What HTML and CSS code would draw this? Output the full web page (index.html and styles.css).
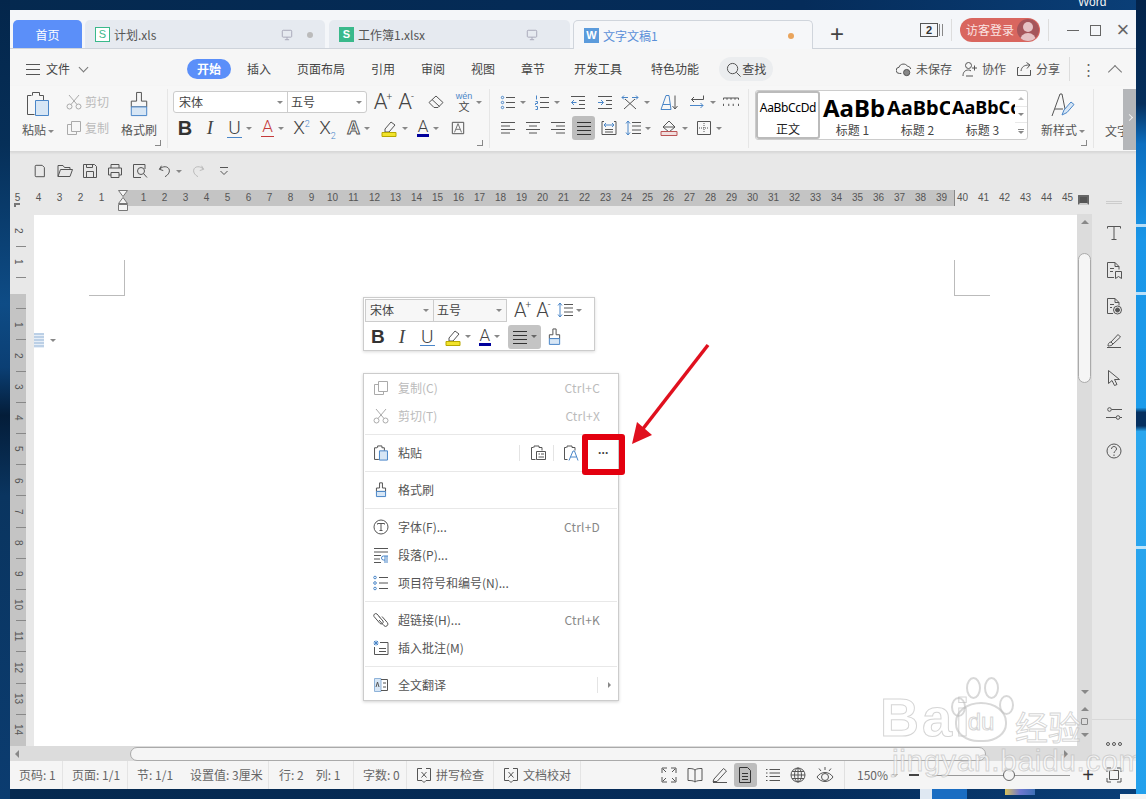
FILE: index.html
```html
<!DOCTYPE html>
<html lang="zh">
<head>
<meta charset="utf-8">
<title>文字文稿1</title>
<link rel="stylesheet" href="styles.css">
</head>
<body>
<svg class="sprite" xmlns="http://www.w3.org/2000/svg">
<symbol id="paste" viewBox="0 0 24 26"><path d="M5.5 4.5H1.5v19h7M6.5 4.500v-3h7v3h4v5"/><rect x="9.500" y="9.500" width="13" height="15" fill="#d7e6f5" stroke="#4a86c8"/></symbol>
<symbol id="cut" viewBox="0 0 16 16"><circle cx="3.500" cy="12.500" r="2.500"/><circle cx="12.500" cy="12.500" r="2.500"/><path d="M5 10.500 13 1M11 10.500 3 1"/></symbol>
<symbol id="copy" viewBox="0 0 16 16"><rect x="5.500" y="1.500" width="9" height="10"/><path d="M5.500 4.500h-4v10h9v-3"/></symbol>
<symbol id="brush" viewBox="0 0 20 28"><path d="M7.500 1.500h5v9h5.500v6H2v-6h5.500z"/><rect x="2" y="16.500" width="16" height="9" fill="#d7e6f5" stroke="#4a86c8"/></symbol>
<symbol id="eraser" viewBox="0 0 16 16"><path d="M1 8.500 8 2l7 6.500-5 5H6zM4 5.500l7.500 7"/></symbol>
<symbol id="frame-a" viewBox="0 0 16 16"><rect x="1.500" y="1.500" width="13" height="13"/><path d="M4 13 8 3l4 10M5.500 9.500h5" stroke="#777"/></symbol>
<symbol id="pen" viewBox="0 0 18 18"><path d="M5 10 11 3l4 3-6 7H5z"/><rect x="2" y="13.500" width="14" height="4" fill="#f2e32b" stroke="#b7a800"/></symbol>
<symbol id="list" viewBox="0 0 16 16"><path d="M6 3.500h9M6 8.500h9M6 13.500h9"/><circle cx="2.500" cy="3.500" r="1.200" stroke="#4a86c8"/><circle cx="2.500" cy="8.500" r="1.200" stroke="#4a86c8"/><circle cx="2.500" cy="13.500" r="1.200" stroke="#4a86c8"/></symbol>
<symbol id="num" viewBox="0 0 16 16"><path d="M6 3.500h9M6 8.500h9M6 13.500h9"/><path d="M2.500 1.500v4M1.500 7.500h2v2h-2v1.500M1.500 12.500h2v3h-2" stroke="#4a86c8"/></symbol>
<symbol id="ind-l" viewBox="0 0 16 16"><path d="M1 2.500h14M9 6.500h6M9 10.500h6M1 14.500h14"/><path d="M6.500 8.500h-5M4 6l-2.500 2.500L4 11" stroke="#4a86c8"/></symbol>
<symbol id="ind-r" viewBox="0 0 16 16"><path d="M1 2.500h14M9 6.500h6M9 10.500h6M1 14.500h14"/><path d="M1 8.500h5M4 6l2.500 2.500L4 11" stroke="#4a86c8"/></symbol>
<symbol id="layout" viewBox="0 0 20 16"><path d="M4 15 15 5M5 5l11 10"/><path d="M2 3.500h6M4 1.500l-2 2 2 2M12 3.500h6M16 1.500l2 2-2 2" stroke="#4a86c8"/></symbol>
<symbol id="sort" viewBox="0 0 18 16"><path d="M1 15.500 6 1.500h3l2 14M3 10.500h7M1 15.500h10" stroke="#4a86c8"/><path d="M15 1.500v13M12.500 12l2.500 3 2.500-3"/></symbol>
<symbol id="para" viewBox="0 0 18 16"><path d="M15.500 1.500v4h-12M6 3 3.500 5.500 6 8"/><path d="M2 11.500h13M12.500 9l2.500 2.500-2.500 2.500" stroke="#4a86c8"/></symbol>
<symbol id="rul" viewBox="0 0 18 12"><path d="M.5 1.500h17v2M.5 1.500v2M4.500 1.500v2M9 1.500v2M13.500 1.500v2M.5 8v2.500M17.500 8v2.500M6.500 8v2.500M11.500 8v2.500" stroke="#555"/></symbol>
<symbol id="al-l" viewBox="0 0 16 16"><path d="M1 2.500h14M1 6h9M1 9.500h14M1 13h9"/></symbol>
<symbol id="al-c" viewBox="0 0 16 16"><path d="M1 2.500h14M4 6h8M1 9.500h14M4 13h8"/></symbol>
<symbol id="al-r" viewBox="0 0 16 16"><path d="M1 2.500h14M6 6h9M1 9.500h14M6 13h9"/></symbol>
<symbol id="al-j" viewBox="0 0 16 16"><path d="M1 2.500h14M1 6.500h14M1 10.500h14M1 14.500h14"/></symbol>
<symbol id="dist" viewBox="0 0 16 16"><path d="M1 1.500v13h14v-13M1 1.500h2M13 1.500h2M4 9.500h8M4 12h8"/><path d="M3 5h10M5 3 3 5l2 2M11 3l2 2-2 2" stroke="#4a86c8"/></symbol>
<symbol id="spacing" viewBox="0 0 16 16"><path d="M7 2.500h9M7 6h9M7 10h9M7 13.500h9"/><path d="M3 1v14M1 3.500 3 1l2 2.500M1 12.500 3 15l2-2.500" stroke="#4a86c8"/></symbol>
<symbol id="shade" viewBox="0 0 18 16"><path d="M3 7 9 1l6 6-6 5z"/><path d="M3 7h12"/><path d="M1 11.500h16v4H1z" stroke="#b55" fill="#f1dede"/></symbol>
<symbol id="borders" viewBox="0 0 16 16"><rect x="1.500" y="1.500" width="13" height="13"/><path d="M8 3v10M3 8h10" stroke-dasharray="1 1"/></symbol>
<symbol id="newstyle" viewBox="0 0 24 24"><path d="M1 23 9 1h2l3 15M4 16h8"/><path d="M11 22l2-5 7-8 3 2.500-7 8z" stroke="#4a86c8" fill="#d7e6f5"/></symbol>
<symbol id="q-new" viewBox="0 0 16 16"><path d="M3.500 1.500h7l2.500 2.500v10.500h-9.500a1 1 0 0 1-1-1v-11a1 1 0 0 1 1-1z"/></symbol>
<symbol id="q-open" viewBox="0 0 16 16"><path d="M1 13.500v-11h5l1.500 2H13v2M1 13.500l2.500-7H15.500l-2.500 7z"/></symbol>
<symbol id="q-save" viewBox="0 0 16 16"><path d="M1.500 1.500h11l2 2v11h-13zM4.500 14.500v-6h7v6M4.500 1.500v3h6v-3"/></symbol>
<symbol id="q-print" viewBox="0 0 16 16"><path d="M4 5V1.500h8V5M4 12H1.500V5h13v7H12M4 9.500h8v5H4z"/></symbol>
<symbol id="q-prev" viewBox="0 0 16 16"><path d="M13 6V1.500H1.500v13H9"/><circle cx="9" cy="8" r="3.500"/><path d="M11.500 10.500l3.500 4"/></symbol>
<symbol id="q-undo" viewBox="0 0 16 16"><path d="M4 2 1.500 6 6 7.500M2 6c3-4 10-4 11 1 .5 3-2 6-5 7.500"/></symbol>
<symbol id="q-redo" viewBox="0 0 16 16"><path d="M12 2l2.500 4L10 7.500M14 6c-3-4-10-4-11 1-.5 3 2 6 5 7.500"/></symbol>
<symbol id="q-more" viewBox="0 0 10 10"><path d="M1 1.500h8M1.500 5l3.500 3.500L8.500 5"/></symbol>
<symbol id="s-t" viewBox="0 0 16 16"><path d="M1.500 3.500v-2h13v2M8 1.500v13M5.500 14.500h5"/></symbol>
<symbol id="s-mark" viewBox="0 0 16 18"><path d="M8 16.500H1.500V1.500H9l4 4v3M9 1.500v4h4M4 7.500h4M4 10.500h3"/><path d="M9.500 10.500h6v7l-3-2-3 2z"/></symbol>
<symbol id="s-star" viewBox="0 0 16 18"><path d="M7 16.500H1.500V1.500H9l4 4v3M9 1.500v4h4M4 7.500h4M4 10.500h2"/><circle cx="11.500" cy="13" r="4"/><circle cx="11.500" cy="13" r="2" fill="#555"/></symbol>
<symbol id="s-pen" viewBox="0 0 16 16"><path d="M5 9 12 1.500l2.500 2.500L7 11zM5 9c-2 0-3 2-3 4 2 0 4-.5 5-2M1 14.500h14"/></symbol>
<symbol id="s-cur" viewBox="0 0 16 18"><path d="M2.500 1.500v13l3.500-3 2.500 5 2.500-1-2.500-5h5z"/></symbol>
<symbol id="s-sl" viewBox="0 0 16 16"><circle cx="3.500" cy="3.500" r="1.800"/><path d="M5.500 3.500H16M0 11.500h10"/><circle cx="12" cy="11.500" r="1.800"/><path d="M14 11.500h2"/></symbol>
<symbol id="s-help" viewBox="0 0 16 16"><circle cx="8" cy="8" r="7"/><path d="M5.500 6c0-3.300 5-3.300 5 0 0 2-2.500 2-2.500 4M8 11.500v1.500"/></symbol>
<symbol id="st-x" viewBox="0 0 16 16"><path d="M6 1.500H1.500v12H6l2 2 2-2h4.500v-12H10M5.500 5l5 5.500M10.500 5l-5 5.500"/></symbol>
<symbol id="st-full" viewBox="0 0 16 16"><path d="M1 6V1h5M2 2l3 3M15 6V1h-5M14 2l-3 3M1 10v5h5M2 14l3-3M15 10v5h-5M14 14l-3-3"/></symbol>
<symbol id="st-book" viewBox="0 0 16 16"><path d="M8 3c-2-1.500-4-1.500-7-1.500v12c3 0 5 0 7 1.500 2-1.500 4-1.500 7-1.500v-12c-3 0-5 0-7 1.500zM8 3v12"/></symbol>
<symbol id="st-pen" viewBox="0 0 16 16"><path d="M2 12 11.500 1.500l3 2.500L5 14.500H1zM1 15.500h14"/></symbol>
<symbol id="st-doc" viewBox="0 0 14 16"><path d="M1.500 .500h8l3 3v12h-11zM4 6.500h6M4 9.500h6M4 12.500h6"/></symbol>
<symbol id="st-list" viewBox="0 0 16 16"><path d="M1 2.500h1.500M4.500 2.500H15M1 6h1.500M4.500 6H15M1 9.500h1.500M4.500 9.500H15M1 13.500h1.500M4.500 13.500H15"/></symbol>
<symbol id="st-globe" viewBox="0 0 16 16"><circle cx="8" cy="8" r="7"/><ellipse cx="8" cy="8" rx="3.500" ry="7"/><path d="M1 8h14M2 4.500h12M2 11.500h12M8 1v14"/></symbol>
<symbol id="st-eye" viewBox="0 0 18 18"><path d="M1 11c4-6 12-6 16 0-4 6-12 6-16 0z"/><circle cx="9" cy="11" r="3.500"/><path d="M9 1v3M3 2.500 5 5M15 2.500 13 5"/></symbol>
<symbol id="st-frame" viewBox="0 0 16 16"><path d="M1 5V1h4M11 1h4v4M15 11v4h-4M5 15H1v-4"/><rect x="3.500" y="3.500" width="9" height="9"/></symbol>
<symbol id="m-pa1" viewBox="0 0 16 16"><path d="M3.500 2.500H1.500v12h4M4 2.500v-1.500h5v1.500h3v3"/><rect x="6.500" y="6.500" width="9" height="8" fill="#fff"/><path d="M8.500 9h1.500M11 9h3M8.500 12h5.500"/></symbol>
<symbol id="m-pa2" viewBox="0 0 16 16"><path d="M3.500 2.500H1.500v12h3M4 2.500v-1.500h5v1.500h3v3"/><path d="M6 15.500 10 6h1.500l3.500 9.500M7.500 12h6" stroke="#4a86c8"/></symbol>
<symbol id="m-t" viewBox="0 0 16 16"><circle cx="8" cy="8" r="7"/><path d="M4.500 5.500v-1h7v1M8 4.500v7M6.500 11.500h3"/></symbol>
<symbol id="m-para" viewBox="0 0 16 16"><path d="M1 1.500h14M1 5h14M1 8.500h7M1 12h6M1 15.500h7"/><path d="M14 9v7M12 9v7M15 9h-4.500a2 2 0 0 0 0 4H12" stroke="#4a86c8"/></symbol>
<symbol id="m-list" viewBox="0 0 16 16"><path d="M6 2.500h9M6 8h9M6 13.500h9"/><circle cx="2" cy="2.500" r="1.300" stroke="#4a86c8"/><circle cx="2" cy="8" r="1.300" stroke="#4a86c8"/><circle cx="2" cy="13.500" r="1.300" stroke="#4a86c8"/></symbol>
<symbol id="m-link" viewBox="0 0 16 16"><path d="M7 5.500 4 2a2 2 0 0 0-3 2.500l6 7a2 2 0 0 0 3-2.500L6 4.500M9 4.500l5.300 6a2.300 2.300 0 0 1-3.300 3.200L6 8"/></symbol>
<symbol id="m-note" viewBox="0 0 16 16"><path d="M7 2.500h8v12H1.500V7M6 8.500h7M6 11.500h7"/><path d="M1 1l4 4M5 1 1 5M3 .500v5M.500 3h5" stroke="#4a86c8"/></symbol>
<symbol id="m-tr" viewBox="0 0 16 16"><path d="M1.500 1.500H8v13H1.500z" fill="#d7e6f5" stroke="#8fb3d9"/><path d="M8 2.500h6.500v11H8M3 10l1.500-5L6 10M10 6h3M10 10h3"/></symbol>
<symbol id="mon" viewBox="0 0 14 14"><rect x="1.500" y="1.500" width="11" height="8" rx="1"/><path d="M7 9.500v3M4.500 12.500h5"/></symbol>
<symbol id="cloud" viewBox="0 0 18 16"><path d="M6 13H4a3.500 3.500 0 0 1-.5-7C4 2 11 1 13 5c2 0 3.500 1.500 3.500 3"/><circle cx="12" cy="12" r="3.500" fill="#888"/></symbol>
<symbol id="collab" viewBox="0 0 16 16"><circle cx="6.500" cy="4.500" r="3"/><path d="M1 15c0-4 2-6 5.500-6 1 0 2 .3 2.500 1M4 15h7M12.500 4.500v5M10 7h5"/></symbol>
<symbol id="share" viewBox="0 0 16 16"><path d="M3 6.500H1.500v8h13V9M5 10c.5-4 3-6 8-6M10.500 1.500 14 4l-3 3.500"/></symbol>
<symbol id="search" viewBox="0 0 16 16"><circle cx="7" cy="7" r="5.500"/><path d="M11 11l4.500 4.500"/></symbol>
<symbol id="indent" viewBox="0 0 12 22"><path d="M1.500 .500h9L6 6.500z" fill="#f5f5f5"/><path d="M6 7.500l-4.500 6h9z" fill="#f5f5f5"/><rect x="1.500" y="14.500" width="9" height="6" fill="#f5f5f5"/></symbol>
</svg>

<div class="wp-left"></div>
<div class="wp-word">Word</div>
<div class="wp-right"><span class="st st1"></span><span class="st st2"></span><span class="st st3"></span></div>
<div class="wp-a"><span class="wp-ai"></span></div>
<div class="wp-b"></div>
<div class="wp-c"></div>

<div class="window">
  <div class="tabbar">
    <div class="tab home">首页</div>
    <div class="tab doc"><span class="fi fi-s-o">S</span><span class="tt">计划.xls</span><svg class="i i12 mon"><use href="#mon"/></svg><span class="dot"></span></div>
    <div class="tab doc tab3"><span class="fi fi-s">S</span><span class="tt">工作簿1.xlsx</span><svg class="i i12 mon"><use href="#mon"/></svg><span class="dot none"></span></div>
    <div class="tab doc active"><span class="fi fi-w">W</span><span class="tt">文字文稿1</span><span class="dot orange"></span></div>
    <div class="plus">+</div>
    <div class="winctl">
      <div class="pages"><span class="pg">2</span><span class="pgbar"></span></div>
      <span class="vsep"></span>
      <div class="login">访客登录<span class="avatar"><span class="av-h"></span><span class="av-b"></span></span></div>
      <span class="vsep"></span>
      <span class="wc wc-min"></span>
      <span class="wc wc-max"></span>
      <span class="wc wc-close">×</span>
    </div>
  </div>

  <div class="menubar">
    <div class="file"><span class="burger"></span><span>文件</span><span class="chev"></span></div>
    <div class="mt pill">开始</div>
    <div class="mt first">插入</div>
    <div class="mt m28">页面布局</div>
    <div class="mt">引用</div>
    <div class="mt">审阅</div>
    <div class="mt">视图</div>
    <div class="mt">章节</div>
    <div class="mt m29">开发工具</div>
    <div class="mt m29">特色功能</div>
    <div class="find"><svg class="i i16"><use href="#search"/></svg>查找</div>
    <div class="mright">
      <span class="mr"><svg class="i i16"><use href="#cloud"/></svg>未保存</span>
      <span class="mr"><svg class="i i16"><use href="#collab"/></svg>协作</span>
      <span class="mr"><svg class="i i16"><use href="#share"/></svg>分享</span>
      <span class="vsep tall"></span>
      <span class="kebab">⋮</span>
      <span class="chev up"></span>
    </div>
  </div>

  <div class="ribbon">
    <div class="group g-clip corner">
      <div class="bigbtn b-paste"><svg class="i big"><use href="#paste"/></svg><span class="lbl">粘贴<span class="car"></span></span></div>
      <div class="smallcol">
        <div class="smb dis"><svg class="i i16"><use href="#cut"/></svg>剪切</div>
        <div class="smb dis"><svg class="i i16"><use href="#copy"/></svg>复制</div>
      </div>
      <div class="bigbtn b-brush"><svg class="i big-b"><use href="#brush"/></svg><span class="lbl">格式刷</span></div>
    </div>

    <div class="group g-font corner">
      <div class="row r-font1">
        <div class="fontsel"><span class="fs fs1">宋体<span class="car"></span></span><span class="fs fs2">五号<span class="car"></span></span></div>
        <div class="c"><span class="glyph">A<sup>+</sup></span></div>
        <div class="c"><span class="glyph">A<sup>-</sup></span></div>
        <div class="c"><svg class="i i16"><use href="#eraser"/></svg></div>
        <div class="c"><span class="wen"><span class="py">wén</span><span class="hz">文</span></span><span class="car"></span></div>
      </div>
      <div class="row r-font2">
        <div class="c"><span class="tb-b">B</span></div>
        <div class="c"><span class="tb-i">I</span></div>
        <div class="c"><span class="tb-u">U</span><span class="car"></span></div>
        <div class="c"><span class="tb-a red">A</span><span class="car"></span></div>
        <div class="c"><span class="tb-x">X<sup>2</sup></span></div>
        <div class="c"><span class="tb-x">X<sub>2</sub></span></div>
        <div class="c"><span class="tb-oa">A</span><span class="car"></span></div>
        <div class="c"><svg class="i i18"><use href="#pen"/></svg><span class="car"></span></div>
        <div class="c"><span class="tb-a blue">A</span><span class="car"></span></div>
        <div class="c"><svg class="i i14"><use href="#frame-a"/></svg></div>
      </div>
    </div>

    <div class="group g-para">
      <div class="row r-para1">
        <div class="c"><svg class="i i16"><use href="#list"/></svg><span class="car"></span></div>
        <div class="c"><svg class="i i16"><use href="#num"/></svg><span class="car"></span></div>
        <div class="c"><svg class="i i16"><use href="#ind-l"/></svg></div>
        <div class="c"><svg class="i i16"><use href="#ind-r"/></svg></div>
        <div class="c"><svg class="i i20"><use href="#layout"/></svg><span class="car"></span></div>
        <div class="c"><svg class="i i18"><use href="#sort"/></svg></div>
        <div class="c"><svg class="i i18"><use href="#para"/></svg><span class="car"></span></div>
        <div class="c"><svg class="i i16"><use href="#rul"/></svg></div>
      </div>
      <div class="row r-para2">
        <div class="c"><svg class="i i16"><use href="#al-l"/></svg></div>
        <div class="c"><svg class="i i16"><use href="#al-c"/></svg></div>
        <div class="c"><svg class="i i16"><use href="#al-r"/></svg></div>
        <div class="c"><span class="activebtn"><svg class="i i16 dark"><use href="#al-j"/></svg></span></div>
        <div class="c"><svg class="i i16"><use href="#dist"/></svg></div>
        <div class="c"><svg class="i i16"><use href="#spacing"/></svg><span class="car"></span></div>
        <div class="c"><svg class="i i18"><use href="#shade"/></svg><span class="car"></span></div>
        <div class="c"><svg class="i i16"><use href="#borders"/></svg><span class="car"></span></div>
      </div>
    </div>

    <div class="group g-style corner">
      <div class="gallery">
        <div class="sty sel"><span class="sp sp0">AaBbCcDd</span><span class="sl">正文</span></div>
        <div class="sty s1"><span class="sp sp1">AaBb</span><span class="sl">标题 1</span></div>
        <div class="sty s2"><span class="sp sp2">AaBbCc</span><span class="sl">标题 2</span></div>
        <div class="sty s3"><span class="sp sp3">AaBbCc</span><span class="sl">标题 3</span></div>
        <div class="gscroll"><span class="gs"><span class="car up"></span></span><span class="gs"><span class="car"></span></span><span class="gs last"><span class="gm"></span><span class="car"></span></span></div>
      </div>
      <div class="bigbtn b-new"><svg class="i big-n"><use href="#newstyle"/></svg><span class="lbl">新样式<span class="car"></span></span></div>
    </div>

    <div class="group g-text"><span class="lbl">文字</span></div>
    <div class="chip"><span class="chip-a"></span></div>
  </div>

  <div class="qat">
    <svg class="i i14 q1"><use href="#q-new"/></svg>
    <svg class="i i16 q2"><use href="#q-open"/></svg>
    <svg class="i i16 q3"><use href="#q-save"/></svg>
    <svg class="i i16 q4"><use href="#q-print"/></svg>
    <svg class="i i16 q5"><use href="#q-prev"/></svg>
    <svg class="i i14 q6"><use href="#q-undo"/></svg><span class="car q-car"></span>
    <svg class="i i14 q7 lite"><use href="#q-redo"/></svg>
    <svg class="i i10 q8"><use href="#q-more"/></svg>
  </div>

  <div class="main">
    <div class="docwrap">
      <div class="hruler">
        <span>5</span><span>4</span><span>3</span><span>2</span><span>1</span><span></span><span>1</span><span>2</span><span>3</span><span>4</span><span>5</span><span>6</span><span>7</span><span>8</span><span>9</span><span>10</span><span>11</span><span>12</span><span>13</span><span>14</span><span>15</span><span>16</span><span>17</span><span>18</span><span>19</span><span>20</span><span>21</span><span>22</span><span>23</span><span>24</span><span>25</span><span>26</span><span>27</span><span>28</span><span>29</span><span>30</span><span>31</span><span>32</span><span>33</span><span>34</span><span>35</span><span>36</span><span>37</span><span>38</span><span>39</span><span>40</span><span>41</span><span>42</span><span>43</span><span>44</span><span>45</span>
        <svg class="i mark-l"><use href="#indent"/></svg>
        <span class="mark-r"></span>
        <span class="mark-c"></span>
        <span class="rbtn"></span>
      </div>
      <div class="work">
        <div class="vruler">
          <span>2</span><i></i><span>1</span><i></i><span></span><i></i><span>1</span><i></i><span>2</span><i></i><span>3</span><i></i><span>4</span><i></i><span>5</span><i></i><span>6</span><i></i><span>7</span><i></i><span>8</span><i></i><span>9</span><i></i><span>10</span><i></i><span>11</span><i></i><span>12</span><i></i><span>13</span><i></i><span>14</span>
        </div>
        <div class="page">
          <span class="crop crop-l"></span>
          <span class="crop crop-r"></span>
          <span class="anchor"><span class="anchor-doc"></span><span class="car"></span></span>
        </div>
        <div class="vscroll">
          <span class="arrow-up"></span>
          <span class="vthumb"></span>
          <div class="vbtm">
            <span class="arrow-dn"></span>
            <span class="arrow-up"></span>
            <span class="vo"></span>
            <span class="arrow-dn"></span>
          </div>
        </div>
      </div>
      <div class="hscroll"><span class="arrow-l"></span><span class="hthumb"></span><span class="arrow-r"></span></div>
    </div>
    <div class="sidebar">
      <span class="sgrip"></span>
      <svg class="i i16"><use href="#s-t"/></svg>
      <svg class="i s18"><use href="#s-mark"/></svg>
      <svg class="i s18"><use href="#s-star"/></svg>
      <svg class="i i16"><use href="#s-pen"/></svg>
      <svg class="i s18 s-c"><use href="#s-cur"/></svg>
      <svg class="i i16 s-s"><use href="#s-sl"/></svg>
      <svg class="i i16"><use href="#s-help"/></svg>
      <div class="sbtm"><span class="sline"></span><span class="sdots"><b></b><b></b><b></b></span></div>
    </div>
  </div>

  <div class="status">
    <span class="si w52">页码: 1</span>
    <span class="si w65">页面: 1/1</span>
    <span class="si plain">节: 1/1</span>
    <span class="si w84">设置值: 3厘米</span>
    <span class="si w85"><em>行: 2</em><em>列: 1</em></span>
    <span class="si w53">字数: 0</span>
    <span class="si w87"><svg class="i i16"><use href="#st-x"/></svg>拼写检查</span>
    <span class="si w87"><svg class="i i16"><use href="#st-x"/></svg>文档校对</span>
    <div class="sright">
      <svg class="i i16"><use href="#st-full"/></svg>
      <svg class="i i16"><use href="#st-book"/></svg>
      <svg class="i i16"><use href="#st-pen"/></svg>
      <span class="st-active"><svg class="i i16 dark"><use href="#st-doc"/></svg></span>
      <svg class="i i16"><use href="#st-list"/></svg>
      <svg class="i i16"><use href="#st-globe"/></svg>
      <svg class="i i18"><use href="#st-eye"/></svg>
      <span class="zoomv">150%<span class="car"></span></span>
      <span class="zminus"></span>
      <span class="slider"><span class="knob"></span></span>
      <span class="zplus">+</span>
      <svg class="i i16 last"><use href="#st-frame"/></svg>
    </div>
  </div>

  <div class="mini">
    <div class="mini-r1">
      <div class="fontsel small"><span class="fs f1">宋体<span class="car"></span></span><span class="fs f2">五号<span class="car"></span></span></div>
      <span class="glyph g1">A<sup>+</sup></span>
      <span class="glyph g2">A<sup>-</sup></span>
      <span class="c g3"><svg class="i i16"><use href="#spacing"/></svg><span class="car"></span></span>
    </div>
    <div class="mini-r2">
      <span class="tb-b">B</span>
      <span class="tb-i">I</span>
      <span class="tb-u">U</span>
      <span class="c"><svg class="i i18"><use href="#pen"/></svg><span class="car"></span></span>
      <span class="c"><span class="tb-a blue">A</span><span class="car"></span></span>
      <span class="mini-active"><svg class="i i16 dark"><use href="#al-j"/></svg><span class="car"></span></span>
      <svg class="i br14"><use href="#brush"/></svg>
    </div>
  </div>

  <div class="ctx">
    <div class="mi dis"><svg class="i i16"><use href="#copy"/></svg><span class="mtx">复制(C)</span><span class="key">Ctrl+C</span></div>
    <div class="mi dis"><svg class="i i16"><use href="#cut"/></svg><span class="mtx">剪切(T)</span><span class="key">Ctrl+X</span></div>
    <div class="msep"></div>
    <div class="mi"><svg class="i i16"><use href="#paste"/></svg><span class="mtx">粘贴</span>
      <span class="pasteopts"><span class="ps"></span><svg class="i i16"><use href="#m-pa1"/></svg><span class="ps"></span><svg class="i i16"><use href="#m-pa2"/></svg><span class="pdots">···</span></span>
    </div>
    <div class="msep"></div>
    <div class="mi"><svg class="i i16"><use href="#brush"/></svg><span class="mtx">格式刷</span></div>
    <div class="msep"></div>
    <div class="mi"><svg class="i i16"><use href="#m-t"/></svg><span class="mtx">字体(F)...</span><span class="key">Ctrl+D</span></div>
    <div class="mi"><svg class="i i16"><use href="#m-para"/></svg><span class="mtx">段落(P)...</span></div>
    <div class="mi"><svg class="i i16"><use href="#m-list"/></svg><span class="mtx">项目符号和编号(N)...</span></div>
    <div class="msep"></div>
    <div class="mi"><svg class="i i16"><use href="#m-link"/></svg><span class="mtx">超链接(H)...</span><span class="key">Ctrl+K</span></div>
    <div class="mi"><svg class="i i16"><use href="#m-note"/></svg><span class="mtx">插入批注(M)</span></div>
    <div class="msep"></div>
    <div class="mi"><svg class="i i16"><use href="#m-tr"/></svg><span class="mtx">全文翻译</span><span class="sub"><span class="ps"></span><span class="arrow-r"></span></span></div>
  </div>

  <div class="redbox"></div>
  <svg class="redarrow" viewBox="0 0 78 101"><path d="M76 2 10 87"/><path class="head" d="M0 101 5 79 20 92z"/></svg>

  <div class="wm">
    <span class="wm-bai">Bai</span>
    <span class="wm-paw"><b class="t1"></b><b class="t2"></b><b class="t3"></b><b class="t4"></b><span class="wm-pad">du</span></span>
    <span class="wm-jy">经验</span>
    <span class="wm-url">jingyan.baidu.com</span>
  </div>
</div>
</body>
</html>
```

FILE: styles.css
```css
*{box-sizing:border-box}
html,body{margin:0;height:100%}
body{position:relative;width:1146px;height:799px;overflow:hidden;background:linear-gradient(90deg,#05294f 0,#052c5a 70%,#0a3f78 100%);font:12px/1.3 "Noto Sans CJK SC","Noto Sans",sans-serif;color:#555}
.sprite{position:absolute;width:0;height:0}
symbol *{vector-effect:non-scaling-stroke}
.wp-left{position:absolute;left:0;top:0;width:10px;height:799px;background:linear-gradient(#04264b 0,#062f58 18%,#0e4c86 38%,#0b3f74 46%,#041d39 52%,#0a3560 62%,#0b3c70 100%)}
.wp-word{position:absolute;left:1078px;top:-5px;color:#f2f2f2;font:12px/14px "Liberation Sans",sans-serif}
.wp-right{position:absolute;left:1136px;top:0;width:10px;height:799px;background:linear-gradient(#03234a 0,#062f5c 13%,#0d6fc0 18%,#1a96e8 30%,#1c9bea 51%,#05305f 51.600%,#05305f 53.300%,#2aa6ee 54%,#23a0ec 100%)}
.st{position:absolute;left:0;width:10px;height:3px;background:rgba(255,255,255,.7)}
.st1{top:224px}.st2{top:292px}.st3{top:546px}
.wp-a{position:absolute;left:920px;top:789px;width:47px;height:10px;background:#1a6dc2}
.wp-ai{position:absolute;left:0;top:0;width:12px;height:10px;background:#dfe8f2}
.wp-b{position:absolute;left:1005px;top:789px;width:30px;height:6px;background:linear-gradient(90deg,#d8c25a,#6f78d0 50%,#3d6fb5)}
.wp-c{position:absolute;left:1120px;top:794px;width:26px;height:5px;background:#f5f5f5}

.window{position:absolute;left:10px;top:10px;width:1126px;height:779px;background:#f5f5f5;display:flex;flex-direction:column;overflow:hidden}
.i{width:16px;height:16px;fill:none;stroke:#555;stroke-width:1;flex:none;display:block}
.i12{width:12px;height:12px;stroke:#aab}.i14{width:14px;height:14px}.i16{width:16px;height:16px}.i18{width:18px;height:18px}.i20{width:20px;height:16px}.i10{width:10px;height:10px}
.dark{stroke:#333}
.car{display:inline-block;width:0;height:0;border:3px solid transparent;border-top:3px solid #888;border-bottom:0;margin-left:4px;vertical-align:middle;flex:none}
.car.up{border-top:0;border-bottom:3px solid #bbb}
.c{display:flex;align-items:center;justify-content:center}
.vsep{width:1px;height:22px;background:#ddd;flex:none}

/* tabs */
.tabbar{height:39px;flex:none;background:#f4f6f9;border-bottom:1px solid #ced3da;padding-left:3px;display:flex;align-items:flex-end;gap:3px}
.tab{height:28px;border-radius:5px 5px 0 0;display:flex;align-items:center;flex:none;padding-top:1px}
.home{width:69px;background:#5b8ff9;color:#fff;justify-content:center}
.doc{width:240px;background:#e6eaf0;padding-left:10px;padding-right:10px}
.tab3{width:241px;margin-left:1px}
.active{width:240px;height:29px;margin-bottom:-1px;background:#f6f7f9;border:1px solid #d0d5dc;border-bottom:0;color:#5a8fd8;margin-left:0}
.fi{width:15px;height:15px;font:bold 11px/15px "Liberation Sans",sans-serif;text-align:center;color:#fff;flex:none;margin-right:4px}
.fi-s-o{background:#fff;border:1px solid #3ab98b;color:#3ab98b;line-height:13px;font-weight:400}
.fi-s{background:#3ab98b}
.fi-w{background:#5b9bdc}
.tt{flex:1;white-space:nowrap;font-size:12px}
.doc .tt{color:#555}
.active .tt{color:#5a8fd8}
.mon{margin-right:14px}
.dot{width:6px;height:6px;border-radius:50%;background:#bbb;flex:none;margin-right:2px}
.dot.none{background:none}
.dot.orange{background:#e9a45c;margin-right:8px}
.plus{font:300 24px/28px "Liberation Sans",sans-serif;color:#444;width:18px;text-align:center;margin-left:12px;height:28px;flex:none}
.winctl{margin-left:auto;align-self:flex-start;margin-top:8px;height:24px;display:flex;align-items:center;padding-right:6px}
.pages{display:flex;align-items:center;margin-right:8px}
.pg{width:18px;height:14px;border:1px solid #555;font:bold 11px/12px "Liberation Sans",sans-serif;color:#333;text-align:center}
.pgbar{width:4px;height:12px;border-left:1px solid #888;border-right:1px solid #888;margin-left:1px}
.login{width:80px;height:24px;border-radius:12px;background:#d9665f;color:#fbe4e2;margin:0 8px;padding-left:6px;display:flex;align-items:center;white-space:nowrap;position:relative}
.avatar{position:absolute;right:1px;top:1px;width:22px;height:22px;border-radius:50%;background:#a5555a;overflow:hidden}
.av-h{position:absolute;left:6px;top:3px;width:10px;height:10px;border-radius:50%;background:#e6c2c4}
.av-b{position:absolute;left:3px;top:14px;width:16px;height:10px;border-radius:8px 8px 0 0;background:#e6c2c4}
.wc{width:12px;height:12px;flex:none;display:block;color:#666}
.wc-min{margin-left:18px;height:1px;background:#666}
.wc-max{margin-left:11px;width:11px;height:11px;border:1px solid #666}
.wc-close{margin-left:15px;width:14px;height:14px;font:300 22px/13px "Liberation Sans",sans-serif;text-align:center}

/* menu */
.menubar{height:37px;flex:none;background:#f6f6f6;display:flex;align-items:center;padding-left:16px;padding-top:3px;color:#444}
.file{display:flex;align-items:center;width:161px}
.burger{width:14px;height:11px;border-top:1px solid #555;border-bottom:1px solid #555;position:relative;margin-right:6px}
.burger::after{content:"";position:absolute;left:0;right:0;top:4px;height:1px;background:#555}
.chev{width:7px;height:7px;border-right:1px solid #777;border-bottom:1px solid #777;transform:rotate(45deg);margin:-3px 0 0 10px;display:block}
.chev.up{width:10px;height:10px;transform:rotate(225deg);margin:5px 0 0 15px;flex:none}
.mt{margin-left:26px;white-space:nowrap}
.mt.pill{margin-left:0;width:44px;height:20px;background:#5b8ff9;border-radius:10px;color:#fff;text-align:center;line-height:20px;font-weight:700}
.mt.first{margin-left:16px}
.mt.m28{margin-left:26px}
.mt.m29{margin-left:29px}
.find{margin-left:20px;width:54px;height:24px;border-radius:12px;background:#ebedef;display:flex;align-items:center;padding-left:7px;gap:1px}
.find .i{width:15px;height:15px}
.mright{margin-left:auto;display:flex;align-items:center;padding-right:16px}
.mr{display:flex;align-items:center;gap:4px;margin-left:10px;color:#555}
.vsep.tall{margin:0 0 0 9px;height:24px}
.kebab{font-size:15px;margin-left:11px;color:#666;width:14px;text-align:center}

/* ribbon */
.ribbon{height:66px;flex:none;background:#f7f7f7;border-bottom:1px solid #d8d8d8;box-shadow:0 1px 2px rgba(0,0,0,.08);display:flex;position:relative;z-index:1}
.group{height:59px;margin-top:3px;padding-top:2px;border-right:1px solid #e6e6e6;position:relative;flex:none}
.corner::after{content:"";position:absolute;right:6px;bottom:2px;width:5px;height:5px;border-right:1px solid #888;border-bottom:1px solid #888}
.g-clip{width:158px;display:flex;padding-left:13px}
.g-font{width:322px;padding-left:5px}
.g-para{width:259px;padding-left:6px}
.g-style{width:345px;padding-left:6px;display:flex}
.g-text{width:29px;border:0;overflow:hidden;padding:34px 0 0 11px;white-space:nowrap}
.lbl{display:block;white-space:nowrap;color:#555}
.bigbtn{display:flex;flex-direction:column;align-items:center}
.b-paste{width:30px}
.big{width:24px;height:26px}
.big-b{width:20px;height:27px}
.big-n{width:24px;height:24px;margin-top:2px}
.bigbtn .lbl{margin-top:5px}
.b-brush .lbl{margin-top:4px}
.b-new .lbl{margin-top:5px}
.bigbtn .car{margin-left:2px}
.smallcol{width:46px;margin:-2px 0 0 13px}
.smb{height:26px;display:flex;align-items:center;gap:3px;white-space:nowrap;color:#bbb}
.smb .i{stroke:#aaa}
.b-brush{width:40px;margin-left:7px}
.row{display:grid}
.r-font1{grid-template-columns:199px 22px 24px 36px 30px;height:22px}
.r-font2{grid-template-columns:24px 26px 33px 33px 25px 27px 35px 35px 34px 26px;height:26px;margin-top:2px}
.r-para1{grid-template-columns:34px 33px 29px 25px 35px 33px 34px 24px;height:22px}
.r-para2{grid-template-columns:24px 25px 25px 27px 24px 34px 37px 34px;height:26px;margin-top:2px}
.fontsel{width:194px;height:22px;border:1px solid #ccc;border-radius:3px;background:#fff;display:flex;color:#444}
.fs{display:flex;align-items:center;padding-left:5px;justify-content:space-between;padding-right:4px}
.fs1{width:114px;border-right:1px solid #ccc}
.fs2{flex:1;padding-left:3px}
.glyph{font:300 22px/22px Roboto,"Liberation Sans",sans-serif;color:#444;position:relative;white-space:nowrap}
.glyph sup{font-size:10px;line-height:0;vertical-align:9px;margin-left:-1px}
.wen{display:flex;flex-direction:column;align-items:center;line-height:1}
.py{font:9px/9px "Liberation Sans",sans-serif;color:#4a86c8}
.hz{font-size:11px;line-height:11px;color:#444}
.tb-b{font:700 20px/22px "Liberation Sans",sans-serif;color:#333}
.tb-i{font:italic 300 19px/22px "Liberation Serif",serif;color:#444}
.tb-u{font:300 19px/18px Roboto,sans-serif;color:#444;border-bottom:1px solid #4a86c8;padding:0 1px}
.tb-a{font:300 17px/15px Roboto,sans-serif;color:#444;border-bottom:3px solid #000;padding:0 1px;height:18px;display:block}
.tb-a.red{border-bottom:1px solid #c43b3b;color:#c43b3b}
.tb-a.blue{border-bottom-color:#00009c}
.tb-x{font:300 19px/20px Roboto,sans-serif;color:#444;white-space:nowrap}
.tb-x sup,.tb-x sub{font-size:9px;line-height:0;color:#4a86c8}
.tb-oa{font:700 18px/20px "Liberation Sans",sans-serif;color:#fff;-webkit-text-stroke:1px #555}
.activebtn{width:23px;height:24px;background:#bdbdbd;border-radius:3px;display:flex;align-items:center;justify-content:center}
.gallery{width:273px;height:50px;border:1px solid #ccc;border-radius:3px;background:#fff;display:flex;overflow:hidden;margin-top:-1px}
.sty{width:65px;flex:none;display:flex;flex-direction:column;align-items:center;overflow:hidden;white-space:nowrap;color:#444;position:relative}
.sel{width:64px;border:2px solid #bbb;border-radius:3px}
.sp{height:31px;display:block;color:#000;width:100%;overflow:hidden}
.sp0{font:12px/29px "Noto Sans",sans-serif;letter-spacing:-.35px;text-align:center;height:28px}
.sp1{font:700 24px/33px "Noto Sans",sans-serif;padding-left:3px}
.sp2{font:700 20px/33px "Noto Sans",sans-serif;padding-left:2px}
.sp3{font:700 18px/33px "Noto Sans",sans-serif;padding-left:2px}
.sl{font-size:12px;line-height:16px}
.sel .sl{line-height:17px;color:#222}
.gscroll{flex:1;display:flex;flex-direction:column}
.gs{height:16px;display:flex;align-items:center;justify-content:center;border-bottom:1px solid #e8e8e8}
.gs .car{margin:0}
.gs.last{flex-direction:column;gap:1px;border:0}
.gm{width:6px;height:1px;background:#888}
.b-new{width:60px;margin-left:5px}
.chip{width:13px;height:61px;margin-top:3px;background:#b4b6b9;flex:none;display:flex;align-items:center;justify-content:center;padding-bottom:4px}
.chip-a{width:5px;height:5px;border-top:1px solid #eee;border-right:1px solid #eee;transform:rotate(45deg)}

/* quick access */
.qat{height:38px;flex:none;background:#e8e8e8;display:flex;align-items:center;padding-left:23px}
.q2{margin-left:10px}.q3{margin-left:9px}.q4{margin-left:9px}.q5{margin-left:9px}.q6{margin-left:10px}
.q-car{margin-left:4px}.q7{margin-left:9px}.q7.lite,.lite{stroke:#bbb}.q8{margin-left:14px}

/* main */
.main{height:571px;flex:none;display:flex;position:relative}
.docwrap{width:1082px;flex:none;display:flex;flex-direction:column}
.hruler{height:24px;flex:none;background:linear-gradient(#c4c4c4,#c4c4c4) no-repeat 113px 0/831px 16px,#e8e8e8;display:flex;overflow:hidden;font:10px/16px "Liberation Sans",sans-serif;color:#555;position:relative}
.hruler>span:not([class]){width:21px;flex:none;text-align:center;position:relative;left:-3px}
.mark-l{position:absolute;left:107px;top:0;width:12px;height:22px;stroke:#777}
.mark-r{position:absolute;left:944px;top:0;width:6px;height:16px;border-left:1px solid #888}
.mark-c{position:absolute;left:4px;top:13px;width:6px;height:4px;border-left:2px solid #777;border-top:2px solid #777}
.rbtn{position:absolute;left:1068px;top:5px;width:11px;height:10px;background:#555;border-radius:1px;border:2px solid #666;border-bottom-color:#ccc}
.work{height:532px;flex:none;display:flex;background:#e8e8e8;padding-top:1px}
.vruler{width:16px;flex:none;margin-top:-1px;background:linear-gradient(#e8e8e8 80px,#c4c4c4 80px);padding-top:9px;height:532px;overflow:hidden;display:flex;flex-direction:column;align-items:center;font:10px/16px "Liberation Sans",sans-serif;color:#555}
.vruler span{height:15.6px;flex:none;writing-mode:vertical-rl;text-align:center;line-height:16px;width:16px;display:block}
.vruler i{height:15.6px;flex:none;width:10px;align-self:flex-end;background:linear-gradient(#888,#888) no-repeat 0 50%/100% 1px}
.page{margin-left:8px;width:1043px;flex:none;background:#fff;position:relative}
.crop{position:absolute;top:45px;width:36px;height:36px;border-bottom:1px solid #bbb}
.crop-l{left:55px;border-right:1px solid #bbb}
.crop-r{left:920px;border-left:1px solid #bbb}
.anchor{position:absolute;left:0;top:118px;display:flex;align-items:center}
.anchor-doc{width:10px;height:15px;background:repeating-linear-gradient(#bcd0e6 0 2px,#e6eef7 2px 3px)}
.anchor .car{margin-left:6px}
.vscroll{width:15px;flex:none;background:#dcdcdc;display:flex;flex-direction:column;align-items:center;margin-top:-1px;height:532px}
.arrow-up,.arrow-dn{width:0;height:0;border:4px solid transparent;flex:none;display:block}
.arrow-up{border-top:0;border-bottom:4px solid #888}
.arrow-dn{border-bottom:0;border-top:4px solid #888}
.vscroll>.arrow-up{margin-top:6px}
.vthumb{width:13px;height:130px;margin-top:29px;border:1px solid #aaa;border-radius:7px;background:#f5f5f5;flex:none}
.vbtm{margin-top:auto;display:flex;flex-direction:column;align-items:center;padding-bottom:9px}
.vbtm .arrow-up{margin-top:13px}
.vo{width:7px;height:7px;border:1px solid #888;margin-top:7px;border-radius:1px}
.vbtm>.arrow-dn:last-child{margin-top:8px}
.hscroll{height:15px;flex:none;background:#dcdcdc;display:flex;align-items:center;padding-left:5px}
.arrow-l,.arrow-r{width:0;height:0;border:4px solid transparent;display:block;flex:none}
.arrow-l{border-left:0;border-right:4px solid #888}
.arrow-r{border-right:0;border-left:4px solid #888}
.hthumb{width:856px;height:14px;margin-left:111px;background:#f5f5f5;border:1px solid #aaa;border-radius:7px;flex:none}
.hscroll .arrow-r{margin-left:78px}
.sidebar{flex:1;background:#e8e8e8;display:flex;flex-direction:column;align-items:center;padding-top:11px}
.sgrip{width:16px;height:3px;border-top:1px solid #ccc;border-bottom:1px solid #ccc;margin-bottom:21px;flex:none}
.sidebar>.i{margin-bottom:20px}
.sidebar>.s18{width:16px;height:18px;margin-bottom:18px}
.sidebar>.s-c{margin-bottom:19px}
.sidebar>.s-s{margin-bottom:21px}
.sbtm{margin-top:auto;width:100%;display:flex;flex-direction:column;align-items:center;padding-bottom:15px}
.sline{width:100%;height:1px;background:#d8d8d8;margin-bottom:22px}
.sdots{display:flex;gap:2px}
.sdots b{width:4px;height:4px;border:1px solid #555;border-radius:50%;display:block}

/* status */
.status{height:28px;flex:none;background:#f5f5f5;display:flex;align-items:center;position:relative;color:#666;white-space:nowrap}
.si{height:100%;display:flex;align-items:center;padding-left:9px;border-right:1px solid #e4e4e4;flex:none}
.w52{width:53px}.w65{width:65px}.plain{width:62px;border:0}.w84{width:79px;padding-left:0}.w85{width:85px;padding-left:10px}.w85 em{font-style:normal;margin-right:12px}.w53{width:53px}.w87{width:87px;gap:4px}
.sright{margin-left:auto;display:flex;align-items:center;height:100%;padding-right:14px}
.sright>.i{margin-right:9.5px}
.st-active{width:23px;height:24px;background:#bdbdbd;border-radius:3px;display:flex;align-items:center;justify-content:center;margin:0 8px 0 -4px;flex:none}
.zoomv{margin-left:1px;border-left:1px solid #e0e0e0;padding-left:12px;height:100%;display:flex;align-items:center;font-size:12px;width:65px}
.zminus{width:10px;height:2px;background:#444;flex:none}
.slider{width:138px;height:1px;background:#999;margin-left:13px;position:relative;flex:none}
.knob{position:absolute;left:71px;top:-6px;width:12px;height:12px;border:1px solid #666;border-radius:50%;background:#f5f5f5}
.zplus{font:20px/20px "Liberation Sans",sans-serif;color:#333;margin-left:12px;width:12px;text-align:center;margin-right:12px}
.sright>.i.last{margin-right:0}

/* mini toolbar */
.mini{position:absolute;left:353px;top:287px;width:232px;height:54px;background:#fff;border:1px solid #ccc;box-shadow:0 1px 3px rgba(0,0,0,.15);padding:0 1px;z-index:3}
.mini-r1{display:flex;align-items:center;height:24px}
.fontsel.small{width:142px;height:23px;border-radius:0;border-color:#ccc;background:#f7f7f7}
.f1{width:68px;border-right:1px solid #ccc;padding-left:4px}
.f2{flex:1;padding-left:3px}
.g1{margin-left:7px;font-size:20px}
.g2{margin-left:5px;font-size:20px}
.g3{margin-left:6px}
.mini-r1 .g3 .car{margin-left:3px}
.mini-r2{display:flex;align-items:center;height:25px;margin-top:2px;padding-left:6px}
.mini-r2 .tb-b{font-size:19px;margin-right:14px}
.mini-r2 .tb-i{margin-right:15px}
.mini-r2 .tb-u{margin-right:9px;height:18px}
.mini-r2 .c{margin-right:8px}
.mini-r2 .c .car{margin-left:3px}
.mini-active{width:33px;height:24px;background:#c4c4c4;border-radius:3px;display:flex;align-items:center;justify-content:center}
.mini-active .car{border-top-color:#666;margin-left:3px}
.br14{width:13px;height:18px;margin-left:7px}

/* context menu */
.ctx{position:absolute;left:353px;top:363px;width:256px;height:328px;background:#fff;border:1px solid #ccc;box-shadow:0 1px 3px rgba(0,0,0,.18);z-index:3;color:#555}
.mi{height:28px;display:flex;align-items:center;padding:0 18px 0 9px;white-space:nowrap;position:relative}
.mi .i{width:16px;height:16px}
.mtx{margin-left:9px;flex:1}
.key{color:#888;letter-spacing:.2px}
.mi.dis{color:#bbb}
.mi.dis .key{color:#bbb}
.mi.dis .i{stroke:#aaa}
.msep{height:1px;margin:4px 1px;background:#e8e8e8}
.pasteopts{display:flex;align-items:center;margin-right:-18px;width:99px}
.ps{width:1px;height:16px;background:#e4e4e4;flex:none}
.pasteopts .i{margin:0 7px 0 10px}
.pasteopts .i:nth-of-type(2){margin-left:9px}
.pdots{margin-left:12px;font:700 12px/12px "Liberation Sans",sans-serif;color:#444;letter-spacing:-.5px}
.sub{display:flex;align-items:center;margin-right:-11px;gap:10px}
.sub .arrow-r{border-width:3px;border-left-color:#888;border-right:0}

/* annotations */
.redbox{position:absolute;left:572px;top:424px;width:43px;height:41px;border:6px solid #e3000f;border-radius:3px;z-index:4}
.redarrow{position:absolute;left:622px;top:333px;width:78px;height:101px;z-index:4;fill:none;overflow:visible}
.redarrow path{stroke:#e0101e;stroke-width:3.5}
.redarrow .head{fill:#e0101e;stroke-width:0}

/* watermark */
.wm{position:absolute;left:870px;top:665px;width:220px;height:105px;z-index:5;color:rgba(255,255,255,.6);-webkit-text-stroke:1px rgba(185,185,185,.6);pointer-events:none;display:block}
.wm span{position:absolute;white-space:nowrap}
.wm-bai{left:0;top:12px;font:700 54px/60px "Liberation Sans",sans-serif;letter-spacing:3px}
.wm-paw{left:73px;top:2px;width:56px;height:68px}
.wm-pad{left:2px;top:25px;width:52px;height:40px;border:2px solid rgba(190,190,190,.6);border-radius:50% 50% 45% 45%;font:400 24px/36px "Liberation Sans",sans-serif;text-align:center}
.wm-paw b{position:absolute;border:2px solid rgba(190,190,190,.6);border-radius:50%;display:block}
.t1{left:-2px;top:20px;width:15px;height:20px}
.t2{left:13px;top:0;width:15px;height:22px}
.t3{left:31px;top:0;width:15px;height:22px}
.t4{left:46px;top:18px;width:15px;height:20px}
.wm-jy{left:135px;top:30px;font:400 33px/42px "Noto Sans CJK SC",sans-serif}
.wm-url{left:12px;top:68px;font:400 30px/36px "Liberation Sans",sans-serif;letter-spacing:.6px}
```
